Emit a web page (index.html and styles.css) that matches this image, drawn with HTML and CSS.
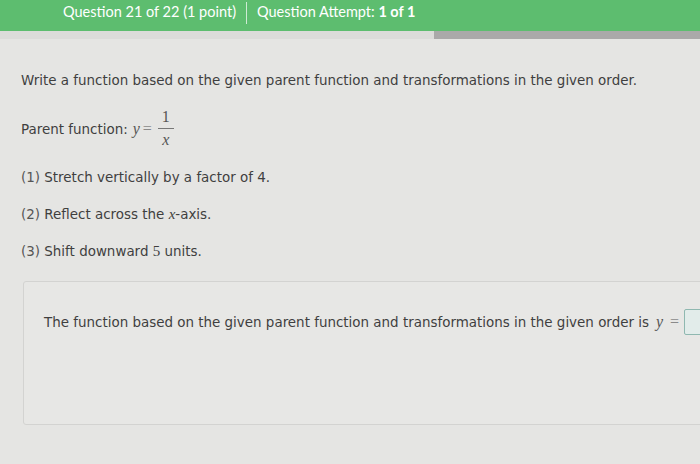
FILE: index.html
```html
<!DOCTYPE html>
<html>
<head>
<meta charset="utf-8">
<link rel="stylesheet" href="styles.css">
</head>
<body>
<header class="topbar">
  <span class="q-num">Question 21 of 22 (1 point)</span>
  <span class="sep"></span>
  <span class="q-attempt">Question Attempt: <b>1 of 1</b></span>
</header>
<div class="progress">
  <div class="progress-done"></div>
  <div class="progress-rest"></div>
</div>
<main class="content">
  <p class="prompt">Write a function based on the given parent function and transformations in the given order.</p>
  <div class="parent">
    <span>Parent function:</span>
    <span class="math"><i class="var">y</i><span class="eq">=</span><span class="frac"><span class="num">1</span><span class="den"><i>x</i></span></span></span>
  </div>
  <p class="step"><span class="paren">(1)</span> Stretch vertically by a factor of 4.</p>
  <p class="step"><span class="paren">(2)</span> Reflect across the <i class="mvar">x</i>-axis.</p>
  <p class="step"><span class="paren">(3)</span> Shift downward <span class="mnum">5</span> units.</p>
  <section class="answer">
    <div class="answer-line">
      <span>The function based on the given parent function and transformations in the given order is</span>
      <i class="var ans-y">y</i><span class="eq ans-eq">=</span><span class="input"></span>
    </div>
  </section>
</main>
</body>
</html>
```
FILE: styles.css
```css
html, body {
  margin: 0;
  padding: 0;
}
body {
  width: 700px;
  height: 464px;
  overflow: hidden;
  background: #e5e5e3;
  font-family: "DejaVu Sans", Verdana, sans-serif;
  color: #3f3f3f;
}
.topbar {
  height: 31px;
  background: #5dbd6f;
  display: flex;
  align-items: flex-start;
  padding-left: 63px;
  padding-top: 2px;
  box-sizing: border-box;
  color: #fff;
  font-family: Lato, "Open Sans", sans-serif;
  font-size: 14.5px;
  line-height: 20px;
}
.sep {
  width: 1px;
  height: 22px;
  background: rgba(255,255,255,0.7);
  margin: 0 10px 0 10px;
}
.q-attempt b {
  font-weight: 700;
}
.progress {
  display: flex;
  height: 8px;
}
.progress-done {
  width: 434px;
  background: #dcdcda;
}
.progress-rest {
  flex: 1;
  background: #aaa9a9;
}
.content {
  padding-left: 21px;
  font-size: 13.45px;
}
.prompt {
  margin: 34px 0 0 0;
  line-height: 16px;
}
.parent {
  margin-top: 18px;
  display: flex;
  align-items: center;
  gap: 5px;
  height: 44px;
}
.math {
  display: inline-flex;
  align-items: center;
  font-family: "Liberation Serif", "Times New Roman", serif;
  font-size: 16px;
  color: #555;
}
.var {
  font-family: "Liberation Serif", serif;
  font-style: italic;
  font-size: 16px;
  color: #555;
}
.eq {
  font-family: "Liberation Serif", serif;
  color: #8a8a8a;
  margin: 0 5px 0 3px;
  font-size: 16px;
}
.frac {
  display: inline-flex;
  flex-direction: column;
  align-items: center;
  margin-left: 1px;
}
.num {
  padding: 0 4px 3px;
  border-bottom: 1px solid #777;
  line-height: 16px;
}
.den {
  line-height: 18px;
  padding-top: 2px;
}
.den i {
  font-style: italic;
}
.step {
  margin: 0;
  height: 16px;
  line-height: 16px;
  margin-top: 21px;
}
.parent + .step {
  margin-top: 19px;
}
.paren {
  color: #555;
}
.mnum, .mvar {
  font-family: "Liberation Serif", serif;
  font-size: 15px;
  line-height: 1;
}
.mvar {
  font-style: italic;
}
.answer {
  margin-top: 21px;
  margin-left: 2px;
  width: 720px;
  height: 144px;
  box-sizing: border-box;
  border: 1px solid #d3d3d1;
  border-radius: 3px;
  background: #e7e7e5;
  padding: 27px 0 0 20px;
}
.answer-line {
  display: flex;
  align-items: center;
  white-space: nowrap;
  height: 26px;
}
.ans-y {
  margin-left: 7px;
}
.ans-eq {
  margin: 0 5px 0 7px;
}
.input {
  display: inline-block;
  width: 30px;
  height: 24px;
  border: 1px solid #8fb8b0;
  background: #e2ecea;
  border-radius: 2px;
}
```
